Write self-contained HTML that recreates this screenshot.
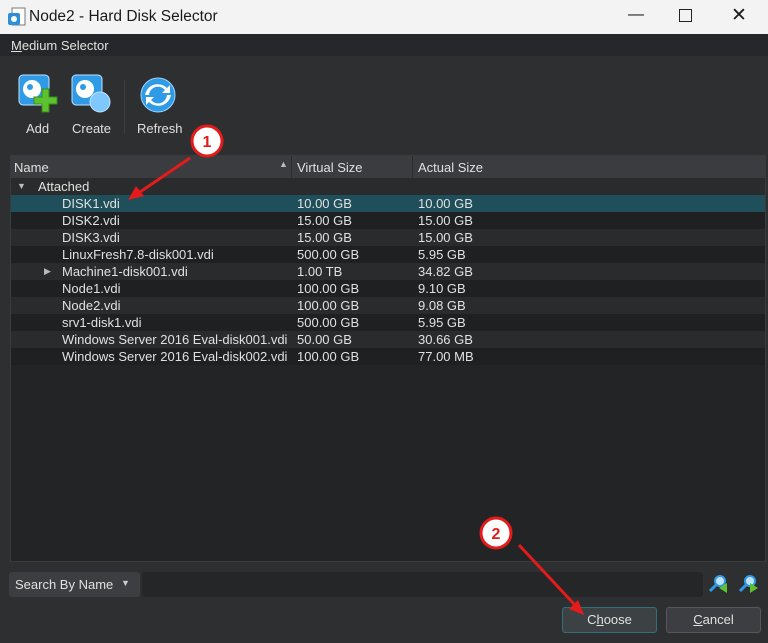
<!DOCTYPE html>
<html><head><style>
body{margin:0;width:768px;height:643px;overflow:hidden;background:#2e2f31;font-family:"Liberation Sans",sans-serif;font-size:13px;color:#e0e0e0;position:relative}
.a{position:absolute}
.title{left:0;top:0;width:768px;height:34px;background:#f3f3f3;color:#1a1a1a;font-size:15.5px}
.menu{left:0;top:34px;width:768px;height:22px;background:#26272a}
.list{left:10px;top:155px;width:756px;height:407px;background:#232426;border:1px solid #3a3b3d;box-sizing:border-box}
.hdr{left:0;top:0;height:22px;width:754px;background:#3b3c3f}
.row{position:absolute;left:0;width:754px;height:17px;line-height:17px}
.row span{position:absolute}
.c1{left:51px}.c2{left:286px}.c3{left:407px}
.tb{position:absolute;top:73px;width:40px;height:40px}
.lbl{position:absolute;top:121px;font-size:13px}
.btn{position:absolute;top:607px;height:26px;width:92px;background:#3d3e41;border:1px solid #55575a;border-radius:3px;box-sizing:border-box;text-align:center;line-height:24px;font-size:13px}
</style></head><body>
<div class="a title">
 <svg class="a" style="left:7px;top:7px" width="20" height="20"><rect x="5" y="1" width="13" height="17" fill="#fff" stroke="#777"/><rect x="1" y="6" width="12" height="12" rx="2" fill="#2e8fd8"/><circle cx="7" cy="12" r="3" fill="#fff"/></svg>
 <span class="a" style="left:29px;top:8px">Node2 - Hard Disk Selector</span>
 <span class="a" style="left:628px;top:6px;font-size:16px">—</span>
 <span class="a" style="left:679px;top:9px;width:11px;height:11px;border:1.3px solid #222"></span>
 <span class="a" style="left:731px;top:4px;font-size:19px">✕</span>
</div>
<div class="a menu"><span class="a" style="left:11px;top:4px;font-size:13px"><u>M</u>edium Selector</span></div>
<svg class="tb" style="left:18px" viewBox="0 0 40 40"><rect x="1" y="2" width="30" height="30" rx="4" fill="#2f9ae6" stroke="#bfe3ff"/><circle cx="14" cy="16" r="9" fill="#fff"/><circle cx="12" cy="14" r="3" fill="#2f9ae6"/><path d="M24 16h7v8h8v7h-8v8h-7v-8h-8v-7h8z" fill="#5cc22e" stroke="#3a8a1a"/></svg>
<svg class="tb" style="left:71px" viewBox="0 0 40 40"><rect x="1" y="2" width="30" height="30" rx="4" fill="#2f9ae6" stroke="#bfe3ff"/><circle cx="14" cy="16" r="9" fill="#fff"/><circle cx="12" cy="14" r="3" fill="#2f9ae6"/><circle cx="29" cy="29" r="10" fill="#7fc8ff" stroke="#bfe3ff"/></svg>
<svg class="tb" style="left:138px" viewBox="0 0 40 40"><circle cx="20" cy="22" r="17" fill="#2f9ae6" stroke="#9fd5ff"/><path d="M11 22a9 9 0 0 1 16-5l-3 3h8v-8l-3 3a13 13 0 0 0-22 7zM29 22a9 9 0 0 1-16 5l3-3h-8v8l3-3a13 13 0 0 0 22-7z" fill="#fff"/></svg>
<span class="lbl" style="left:26px">Add</span>
<span class="lbl" style="left:72px">Create</span>
<span class="lbl" style="left:137px">Refresh</span>
<div class="a" style="left:124px;top:80px;width:1px;height:54px;background:#3e3f42"></div>
<div class="a list">
 <div class="a hdr">
  <span class="a" style="left:3px;top:4px">Name</span><span class="a" style="left:268px;top:3px;font-size:9px;color:#bbb">▲</span>
  <div class="a" style="left:280px;top:0;width:1px;height:22px;background:#2a2b2d"></div>
  <span class="a" style="left:286px;top:4px">Virtual Size</span>
  <div class="a" style="left:401px;top:0;width:1px;height:22px;background:#2a2b2d"></div>
  <span class="a" style="left:407px;top:4px">Actual Size</span>
 </div>
 <div class="row" style="top:22px;background:#2a2b2d"><span style="left:6px;font-size:9px;color:#bbb">▼</span><span style="left:27px">Attached</span></div>
 <div class="row" style="top:39px;background:#1f4f5a"><span class="c1">DISK1.vdi</span><span class="c2">10.00 GB</span><span class="c3">10.00 GB</span></div>
 <div class="row" style="top:56px;background:#1f2022"><span class="c1">DISK2.vdi</span><span class="c2">15.00 GB</span><span class="c3">15.00 GB</span></div>
 <div class="row" style="top:73px;background:#2a2b2d"><span class="c1">DISK3.vdi</span><span class="c2">15.00 GB</span><span class="c3">15.00 GB</span></div>
 <div class="row" style="top:90px;background:#1f2022"><span class="c1">LinuxFresh7.8-disk001.vdi</span><span class="c2">500.00 GB</span><span class="c3">5.95 GB</span></div>
 <div class="row" style="top:107px;background:#2a2b2d"><span style="left:33px;font-size:9px;color:#bbb">▶</span><span class="c1">Machine1-disk001.vdi</span><span class="c2">1.00 TB</span><span class="c3">34.82 GB</span></div>
 <div class="row" style="top:124px;background:#1f2022"><span class="c1">Node1.vdi</span><span class="c2">100.00 GB</span><span class="c3">9.10 GB</span></div>
 <div class="row" style="top:141px;background:#2a2b2d"><span class="c1">Node2.vdi</span><span class="c2">100.00 GB</span><span class="c3">9.08 GB</span></div>
 <div class="row" style="top:158px;background:#1f2022"><span class="c1">srv1-disk1.vdi</span><span class="c2">500.00 GB</span><span class="c3">5.95 GB</span></div>
 <div class="row" style="top:175px;background:#2a2b2d"><span class="c1">Windows Server 2016 Eval-disk001.vdi</span><span class="c2">50.00 GB</span><span class="c3">30.66 GB</span></div>
 <div class="row" style="top:192px;background:#1f2022"><span class="c1">Windows Server 2016 Eval-disk002.vdi</span><span class="c2">100.00 GB</span><span class="c3">77.00 MB</span></div>
</div>
<div class="a" style="left:9px;top:572px;width:131px;height:25px;background:#3d3e41;border-radius:3px"><span class="a" style="left:6px;top:5px;font-size:13px">Search By Name</span><span class="a" style="left:112px;top:6px;font-size:9px;color:#ccc">▼</span></div>
<div class="a" style="left:142px;top:572px;width:561px;height:25px;background:#252628;border-radius:3px"></div>
<svg class="a" style="left:707px;top:574px" width="22" height="20"><circle cx="13" cy="7" r="5" fill="#bfe3ff" stroke="#2f9ae6" stroke-width="2"/><path d="M9 11l-6 6" stroke="#2f9ae6" stroke-width="3"/><path d="M20 9v10l-8-5z" fill="#5cc22e"/></svg>
<svg class="a" style="left:737px;top:574px" width="22" height="20"><circle cx="13" cy="7" r="5" fill="#bfe3ff" stroke="#2f9ae6" stroke-width="2"/><path d="M9 11l-6 6" stroke="#2f9ae6" stroke-width="3"/><path d="M13 9v10l8-5z" fill="#5cc22e"/></svg>
<div class="btn" style="left:562px;width:95px;border-color:#2e6f7a;background:#3c4244">C<u>h</u>oose</div>
<div class="btn" style="left:666px;width:95px"><u>C</u>ancel</div>
<svg class="a" style="left:0;top:0" width="768" height="643">
 <line x1="190" y1="158" x2="140" y2="192" stroke="#e31b1b" stroke-width="3"/><path d="M128 200l8-14 8 10z" fill="#e31b1b"/>
 <circle cx="207" cy="141" r="15" fill="#fff" stroke="#e31b1b" stroke-width="3"/><text x="207" y="147" text-anchor="middle" font-family="Liberation Sans" font-weight="bold" font-size="16" fill="#e31b1b">1</text>
 <line x1="519" y1="545" x2="574" y2="604" stroke="#e31b1b" stroke-width="3"/><path d="M584 615l-15-6 9-9z" fill="#e31b1b"/>
 <circle cx="496" cy="533" r="15" fill="#fff" stroke="#e31b1b" stroke-width="3"/><text x="496" y="539" text-anchor="middle" font-family="Liberation Sans" font-weight="bold" font-size="16" fill="#e31b1b">2</text>
</svg>
</body></html>
